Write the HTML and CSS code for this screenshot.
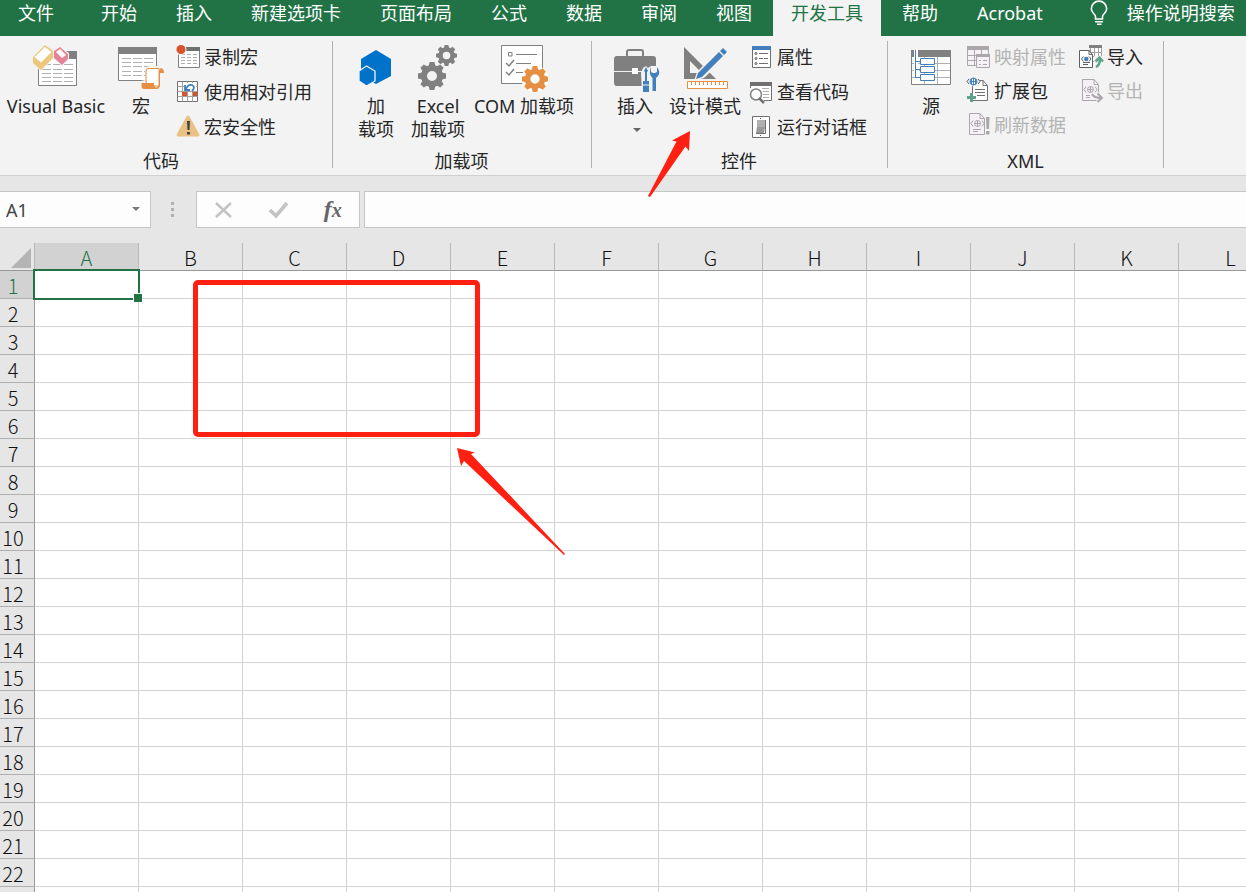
FILE: index.html
```html
<!DOCTYPE html>
<html lang="zh-CN">
  <head>
    <meta charset="UTF-8" />
    <meta name="viewport" content="width=device-width, initial-scale=1.0" />
    <link rel="stylesheet" href="styles.css">
    <title>Excel - 开发工具</title>
  </head>
  <body>
    <svg class="symbols" aria-hidden="true">
      <symbol id="gear" viewBox="-14 -14 28 28">
        <circle r="8" fill="none" stroke="currentColor" stroke-width="6" />
        <g id="teeth" fill="currentColor">
          <path d="M-3.4-10L-2.4-14H2.4L3.4-10ZM-3.4 10L-2.4 14H2.4L3.4 10ZM-10-3.4L-14-2.4V2.4L-10 3.4ZM10-3.4L14-2.4V2.4L10 3.4Z" />
          <path transform="rotate(45)" d="M-3.4-10L-2.4-14H2.4L3.4-10ZM-3.4 10L-2.4 14H2.4L3.4 10ZM-10-3.4L-14-2.4V2.4L-10 3.4ZM10-3.4L14-2.4V2.4L10 3.4Z" />
        </g>
      </symbol>
    </svg>

    <nav class="tabs">
      <button class="tab file">文件</button>
      <button class="tab">开始</button>
      <button class="tab">插入</button>
      <button class="tab">新建选项卡</button>
      <button class="tab">页面布局</button>
      <button class="tab">公式</button>
      <button class="tab">数据</button>
      <button class="tab">审阅</button>
      <button class="tab">视图</button>
      <button class="tab active">开发工具</button>
      <button class="tab">帮助</button>
      <button class="tab">Acrobat</button>
      <button class="tell-me">
        <svg width="18" height="26" viewBox="0 0 18 26" fill="none" stroke="#fff" stroke-width="1.6">
          <path d="M5.500 19V16.500C5.500 14 1.300 13 1.300 8.800A7.700 7.700 0 0 1 16.700 8.800C16.700 13 12.500 14 12.500 16.500V19Z" />
          <path d="M5 21.700H13M7 24.300H11.500" />
        </svg>
        操作说明搜索
      </button>
    </nav>

    <main class="ribbon">
      <section class="group code">
        <div class="tools">
          <button class="big vb">
            <svg viewBox="0 0 48 48">
              <path d="M6.500 8.500H44.500V41.500H6.500Z" fill="#fff" stroke="#808080" />
              <path d="M34 7H45V15H34Z" fill="#808080" />
              <path d="M10 20.500H41M10 25.500H41M10 29.500H41M10 33.500H41M10 37.500H41" stroke="#b0b0b0" stroke-dasharray="9 2" />
              <path d="M0 13L12 0L22 8V14L9 27L0 20Z" fill="#f3f3f3" />
              <path d="M1 13L13 1L21 7V14L9 26L1 19Z" fill="#edc77c" />
              <path d="M2.500 13L13 3L19.500 8L9 18.500Z" fill="#fff" />
              <path d="M21 6L27 2L37 9V16L30 22L21 15Z" fill="#f3f3f3" />
              <path d="M22 7L28 3L36 10V15L30 21L22 14Z" fill="#e58498" />
              <path d="M24 8L28 5L34 11L30 14Z" fill="#fff" />
            </svg>
            <span>Visual Basic</span>
          </button>
          <button class="big macro">
            <svg viewBox="0 0 48 48">
              <path d="M1.500 4H39.500V36.500H1.500Z" fill="#fff" stroke="#808080" />
              <path d="M1 3H40V10H1Z" fill="#808080" />
              <path d="M5 14.500H36M5 18.500H36M5 22.500H36M5 27.500H36M5 31.500H36" stroke="#b0b0b0" stroke-dasharray="9 2" />
              <path d="M24 37L28 36V24L32 22H47V30H45V42L42 46H26L23 43Z" fill="#f3f3f3" />
              <path d="M29 38V27Q29 24.500 32 24.500H42V42H32Z" fill="#fff" stroke="#e68f43" />
              <path d="M30 24H43Q47 24 47 29H43V41Q43 45 39 45H27Q24.500 45 24.500 42V39H37Q37 44 40 43.500Q42 43 42 40V28Q42 25 44 24Z" fill="#e68f43" />
            </svg>
            <span>宏</span>
          </button>
          <div class="small-tools">
            <button class="small">
              <svg viewBox="0 0 24 24">
                <path d="M1.500 4V22.500H22.500V4" fill="#fff" stroke="#808080" />
                <path d="M8 2H23V6H8Z" fill="#707070" />
                <path d="M4 9.500H20M4 12.500H20M4 15.500H20M4 18.500H20" stroke="#b0b0b0" stroke-dasharray="4 2" />
                <circle cx="4" cy="4.500" r="5.500" fill="#f3f3f3" /><circle cx="4" cy="4.500" r="4.500" fill="#d9532c" />
              </svg>
              录制宏
            </button>
            <button class="small">
              <svg viewBox="0 0 24 24">
                <path d="M.5 1.500H20.500V21.500H.5Z" fill="#fff" stroke="#707070" />
                <path d="M.5 6.500H20.500M.5 11.500H20.500M.5 16.500H20.500M5.500 1.500V21.500M10.500 1.500V21.500M15.500 1.500V21.500" stroke="#a0a0a0" />
                <path d="M7 3H19V11H7Z" fill="#fff" />
                <path d="M5 12H10V16H5ZM16 12H20V16H16Z" fill="#d9532c" />
                <path d="M9 9Q11 4 15 5Q19 7 15 11M8 5V10H13" fill="none" stroke="#427fbd" stroke-width="1.800" />
              </svg>
              使用相对引用
            </button>
            <button class="small">
              <svg viewBox="0 0 24 24">
                <path d="M11 2L21 20H1Z" fill="#e9c283" stroke="#e9c283" stroke-width="3" stroke-linejoin="round" />
                <path d="M10 6H13L12.500 15H10.500ZM10 17H13V19.500H10Z" fill="#444" />
              </svg>
              宏安全性
            </button>
          </div>
        </div>
        <h2>代码</h2>
      </section>

      <section class="group addins">
        <div class="tools">
          <button class="big addin">
            <svg viewBox="0 0 48 48">
              <path d="M24 6L39 15V32L24 40L9 32V15Z" fill="#0072c9" />
              <path d="M14.500 22L23 27V37L14.500 42L7 37V27Z" fill="#0072c9" stroke="#f3f3f3" stroke-width="1.300" />
            </svg>
            <span>加<br>载项</span>
          </button>
          <button class="big excel">
            <svg viewBox="0 0 48 48" color="#808080">
              <use href="#gear" x="4" y="18" width="28" height="28" />
              <use href="#gear" x="22" y="1" width="21" height="21" />
            </svg>
            <span>Excel<br>加载项</span>
          </button>
          <button class="big com">
            <svg viewBox="0 0 48 48" color="#e68f43">
              <path d="M1.500 1.500H42.500V39.500H1.500Z" fill="#fff" stroke="#808080" />
              <path d="M8.500 8.500H12V12H8.500ZM16 10.500H37M16 19.500H31M16 28.500H24" fill="none" stroke="#808080" />
              <path d="M6 19L9 22L14 16M6 28L9 31L14 25" fill="none" stroke="#808080" stroke-width="1.500" />
              <circle cx="35" cy="35" r="13.500" fill="#fff" />
              <use href="#gear" x="22" y="22" width="26" height="26" />
            </svg>
            <span>COM 加载项</span>
          </button>
        </div>
        <h2>加载项</h2>
      </section>

      <section class="group controls">
        <div class="tools">
          <button class="big insert">
            <svg viewBox="0 0 48 48">
              <path d="M16 12V8Q16 6 18 6H30Q32 6 32 8V12" fill="none" stroke="#808080" stroke-width="2" />
              <path d="M6 12H42Q45 12 45 15V27H3V15Q3 12 6 12ZM3 28H45V39Q45 42 42 42H6Q3 42 3 39Z" fill="#808080" />
              <path d="M21 24H27V30H21Z" fill="#fff" />
              <path d="M30 29L32 24L35 22L37 24L40 22H49V34L46 36V48H31Z" fill="#f3f3f3" />
              <path d="M35 23L37 27L36 28V37H38V48H32V37H34V28L33 27Z" fill="#427fbd" />
              <path d="M32 41H38" stroke="#f3f3f3" />
              <path d="M40 23V28L42 29H44L46 28V23Q50 28 47 32L45 34V47H41.500V34Q37 30 40 23Z" fill="#427fbd" />
            </svg>
            <span>插入</span>
            <svg class="caret" viewBox="0 0 8 5"><path d="M0 0H8L4 4Z" fill="#666" /></svg>
          </button>
          <button class="big design">
            <svg viewBox="0 0 48 48">
              <path d="M3 3L35 35H3ZM9 17V29H21Z" fill="#808080" fill-rule="evenodd" />
              <path d="M13 37L16 28L40 3L48 10L23 34Z" fill="#f3f3f3" />
              <path d="M15 35L17 29L38 8L42 12L21 33ZM39 7L42 4L46 8L43 11Z" fill="#427fbd" />
              <path d="M6.500 37.500H46.500V44.500H6.500Z" fill="#fff" stroke="#e68f43" />
              <path d="M10.500 38V41M14.500 38V41M18.500 38V41M22.500 38V41M26.500 38V41M30.500 38V41M34.500 38V41M38.500 38V41M42.500 38V41" stroke="#e68f43" />
            </svg>
            <span>设计模式</span>
          </button>
          <div class="small-tools">
            <button class="small">
              <svg viewBox="0 0 24 24">
                <path d="M2.500 2.500H20.500V22.500H2.500Z" fill="#fff" stroke="#707070" />
                <path d="M2 1H21V5H2Z" fill="#427fbd" />
                <path d="M9 8.500H18M9 13.500H13M14 13.500H18M9 18.500H18" stroke="#707070" />
                <g fill="none" stroke="#555"><circle cx="6" cy="8.500" r="1" /><circle cx="6" cy="13.500" r="1" /><circle cx="6" cy="18.500" r="1" /></g>
              </svg>
              属性
            </button>
            <button class="small">
              <svg viewBox="0 0 24 24">
                <path d="M.5 2.500H21.500V20.500H.5Z" fill="#fff" />
                <path d="M.5 8V2.500H21.500V20.500H14" fill="none" stroke="#707070" />
                <path d="M0 2H22V6H0Z" fill="#707070" />
                <path d="M12 8.500H19M13 11.500H19M13 14.500H19M13 17.500H19" stroke="#b0b0b0" />
                <path d="M0 15H8V22H0Z" fill="#f3f3f3" />
                <circle cx="6" cy="14.500" r="5.500" fill="#fff" stroke="#808080" stroke-width="1.500" />
                <path d="M9 18L14 23" stroke="#707070" stroke-width="2.500" />
              </svg>
              查看代码
            </button>
            <button class="small">
              <svg viewBox="0 0 24 24">
                <path d="M2.500 1.500H19.500V22.500H2.500Z" fill="#fff" stroke="#707070" />
                <path d="M7 5H15V12H7Z" fill="#b0b0b0" /><path d="M7 12H15L14 18H6Z" fill="#999" />
                <path d="M6 18.500H15.500V5" fill="none" stroke="#707070" />
                <path d="M10.500 3V4M10.500 20V21" stroke="#555" />
              </svg>
              运行对话框
            </button>
          </div>
        </div>
        <h2>控件</h2>
      </section>

      <section class="group xml">
        <div class="tools">
          <button class="big source">
            <svg viewBox="0 0 48 48">
              <path d="M4.500 6.500H43.500V40.500H4.500Z" fill="#fff" stroke="#808080" />
              <path d="M4 6H44V13H4Z" fill="#808080" />
              <path d="M5 19.500H43M5 26.500H43M5 33.500H43M17.500 13V40M30.500 13V40" stroke="#b0b0b0" />
              <path d="M7 6H11V33H7Z" fill="#fff" />
              <path d="M8.500 6V33.500H13M8.500 17.500H13M8.500 25.500H13M13.500 14.500H27.500V20.500H13.500ZM13.500 22.500H27.500V28.500H13.500ZM13.500 30.500H27.500V36.500H13.500Z" fill="#fff" stroke="#427fbd" />
            </svg>
            <span>源</span>
          </button>
          <div class="small-tools">
            <button class="small" disabled>
              <svg viewBox="0 0 24 24">
                <path d="M.5 2.500H21.500V20.500H.5Z" fill="#f6f1f6" stroke="#aaa6aa" />
                <path d="M0 1H22V5H0ZM9 9H23V13H9Z" fill="#aaa6aa" />
                <path d="M1 10.500H9M1 15.500H9M7.500 5V20M14.500 5V9" stroke="#aaa6aa" />
                <path d="M9.500 10.500H22.500V22.500H9.500Z" fill="#f6f1f6" stroke="#aaa6aa" />
                <path d="M9 9H23V12H9Z" fill="#aaa6aa" />
                <path d="M12 15.500H14M16 15.500H20M12 19.500H14M16 19.500H20" stroke="#aaa6aa" />
              </svg>
              映射属性
            </button>
            <button class="small">
              <svg viewBox="0 0 24 24">
                <path d="M5.500 1.500H16L20.500 6.500V21.500H5.500Z" fill="#fff" stroke="#707070" />
                <path d="M16 1V6.500H20M8 10.500H18M8 13.500H18M10 16.500H18" fill="none" stroke="#707070" />
                <path d="M0-1H13V7H0Z" fill="#f3f3f3" />
                <path d="M2 0L0 2.500L2 5M11 0L13 2.500L11 5" fill="none" stroke="#555" />
                <circle cx="6.500" cy="2.500" r="3.500" fill="#fff" stroke="#427fbd" />
                <path d="M3 2.500H10M6.500-1V6M4.500 0V5M8.500 0V5" stroke="#427fbd" />
                <path d="M3 14H6V17H9V20H6V23H3V20H0V17H3Z" fill="#5ea48b" />
              </svg>
              扩展包
            </button>
            <button class="small" disabled>
              <svg viewBox="0 0 24 24">
                <path d="M2.500 .5H13L17.500 5.500V21.500H2.500Z" fill="#f6f1f6" stroke="#aaa6aa" />
                <path d="M13 .5V5.500H17M6 16.500H14M6 18.500H11M6 7.500L4 10.500L6 13.500M15 7.500L17 10.500L15 13.500M8 10.500H13M10.500 8V13" fill="none" stroke="#aaa6aa" />
                <circle cx="10.500" cy="10.500" r="3" fill="none" stroke="#aaa6aa" />
                <path d="M19 4H22.500L22 16H19.500ZM19 18H22.500V21.500H19Z" fill="#aaa6aa" />
              </svg>
              刷新数据
            </button>
          </div>
          <div class="small-tools">
            <button class="small">
              <svg viewBox="0 0 24 24">
                <path d="M10.500 1.500H21.500V16.500H10.500Z" fill="#fff" stroke="#a0a0a0" />
                <path d="M11 7.500H21M11 11.500H21M14.500 3V16M18.500 3V16" stroke="#a0a0a0" />
                <path d="M9 0H22V3H9Z" fill="#808080" />
                <path d="M-.5 5.500H9L12.500 9.500V22.500H-.5Z" fill="#fff" stroke="#606060" />
                <path d="M9 5V9.500H12M3 17.500H10M3 19.500H8M3.500 11.500L1.500 14L3.500 16.500M9 11.500L11 14L9 16.500" fill="none" stroke="#606060" />
                <circle cx="6.300" cy="14" r="2.300" fill="#427fbd" />
                <path d="M14 11H23V22H14Z" fill="#f3f3f3" />
                <path d="M16 22Q20 20 20 14M15.500 16.500L19.500 12.500L23 16.500" fill="none" stroke="#5ea48b" stroke-width="2.500" />
              </svg>
              导入
            </button>
            <button class="small" disabled>
              <svg viewBox="0 0 24 24">
                <path d="M2.500 .5H14L18.500 5.500V21.500H2.500Z" fill="#f6f1f6" stroke="#aaa6aa" />
                <path d="M14 .5V5.500H18M6 16.500H10M6 18.500H10M6 7.500L4 10.500L6 13.500M15 7.500L17 10.500L15 13.500M8 10.500H13M10.500 8V13" fill="none" stroke="#aaa6aa" />
                <circle cx="10.500" cy="10.500" r="3" fill="none" stroke="#aaa6aa" />
                <path d="M12 15Q14 19 21 19M17.500 14.500L22 19L17.500 23" fill="none" stroke="#f3f3f3" stroke-width="4" />
                <path d="M12 15Q14 19 21 19M17.500 14.500L22 19L17.500 23" fill="none" stroke="#aaa6aa" stroke-width="2" />
              </svg>
              导出
            </button>
          </div>
        </div>
        <h2>XML</h2>
      </section>
    </main>

    <div class="formula-bar">
      <div class="name-box">
        <input type="text" value="A1" aria-label="名称框">
        <button aria-label="名称列表"><svg class="caret" viewBox="0 0 8 5"><path d="M0 0H8L4 4Z" fill="#777" /></svg></button>
      </div>
      <div class="dots"><i></i><i></i><i></i></div>
      <div class="entry">
        <button aria-label="取消">
          <svg width="20" height="18" viewBox="0 0 20 18"><path d="M2 2L17 16M17 2L2 16" stroke="#c3c3c3" stroke-width="2.500" /></svg>
        </button>
        <button aria-label="输入">
          <svg width="20" height="18" viewBox="0 0 20 18"><path d="M1 9L7 15L18 2" fill="none" stroke="#c3c3c3" stroke-width="3.500" /></svg>
        </button>
        <button class="fx" aria-label="插入函数">f<span>x</span></button>
      </div>
      <input class="formula" type="text" aria-label="编辑栏">
    </div>

    <div class="sheet">
      <table>
        <thead>
          <tr id="columns"><th class="corner"><svg width="20" height="20" viewBox="0 0 20 20"><path d="M20 0V20H0Z" fill="#b4b4b4" /></svg></th></tr>
        </thead>
        <tbody id="rows"></tbody>
      </table>
    </div>

    <div class="mark-box"></div>
    <svg class="arrow arrow-design" viewBox="0 0 44 68"><path d="M42 1L24 10.500L28.500 11.500L0 66L2 67L37.500 16.500L41 21Z" /></svg>
    <svg class="arrow arrow-range" viewBox="0 0 110 108"><path d="M1 0L19 4.500L15 6L109 106L108 107L8 13L5 18Z" /></svg>

    <script>
      const columns = document.getElementById("columns");
      const rows = document.getElementById("rows");
      const letters = "ABCDEFGHIJKL";
      const rowCount = 22;

      for (const letter of letters) {
        const th = document.createElement("th");
        th.textContent = letter;
        if (letter === "A") th.className = "selected";
        columns.appendChild(th);
      }

      // one more row without a number fills the bottom edge
      for (let i = 1; i <= rowCount + 1; i++) {
        const tr = document.createElement("tr");
        const th = document.createElement("th");
        if (i <= rowCount) th.textContent = i;
        if (i === 1) th.className = "selected";
        tr.appendChild(th);
        for (const letter of letters) {
          const td = document.createElement("td");
          if (i === 1 && letter === "A") td.className = "current";
          tr.appendChild(td);
        }
        rows.appendChild(tr);
      }
    </script>
  </body>
</html>
```
FILE: styles.css
```css
* {
  box-sizing: border-box;
}
body {
  margin: 0;
  height: 100vh;
  overflow: hidden;
  position: relative;
  display: flex;
  flex-direction: column;
  font-family: "Noto Sans", "Noto Sans CJK SC", sans-serif;
  font-size: 18px;
  color: #262626;
  background: #fff;
}
button,
input {
  font: inherit;
  color: inherit;
  border: 0;
  padding: 0;
  margin: 0;
  background: none;
}
svg {
  display: block;
  flex: none;
}
.symbols {
  position: absolute;
  width: 0;
  height: 0;
}

/* tabs */
.tabs {
  display: flex;
  gap: 3px;
  height: 36px;
  flex: none;
  background: #217346;
  color: #fff;
  white-space: nowrap;
}
.tab {
  padding: 0 18px 10px;
  line-height: 26px;
}
.file {
  margin-right: 8px;
}
.tab.active {
  background: #f3f3f3;
  color: #217346;
}
.tell-me {
  display: flex;
  align-items: flex-start;
  gap: 19px;
  margin-left: 26px;
  line-height: 26px;
}

/* ribbon */
.ribbon {
  display: flex;
  flex: none;
  height: 140px;
  padding: 5px 0 7px;
  background: #f3f3f3;
  border-bottom: 1px solid #d0d0d0;
  white-space: nowrap;
}
.group {
  display: flex;
  flex-direction: column;
  justify-content: space-between;
  border-right: 1px solid #b0b0b0;
}
.group h2 {
  margin: 0;
  font-size: 18px;
  font-weight: normal;
  line-height: 14px;
  text-align: center;
}
.tools {
  display: flex;
  align-items: flex-start;
  padding-top: 3px;
}
.big {
  display: flex;
  flex-direction: column;
  align-items: center;
  line-height: 23px;
}
.big svg {
  width: 48px;
  height: 48px;
  margin-bottom: 3px;
  overflow: visible;
}
.caret,
.big .caret {
  width: 8px;
  height: 5px;
  margin: 10px 0 0 4px;
}
.small-tools {
  display: flex;
  flex-direction: column;
  align-items: flex-start;
  gap: 11px;
  padding-top: 1px;
}
.small {
  display: flex;
  align-items: center;
  gap: 3px;
  line-height: 24px;
}
.small svg {
  width: 24px;
  height: 24px;
  overflow: visible;
}
.small:disabled {
  color: #b4b4b4;
}
.code {
  width: 333px;
  padding-right: 10px;
}
.vb {
  width: 112px;
}
.macro {
  width: 58px;
  margin-right: 7px;
}
.addins {
  width: 259px;
  padding-left: 17px;
}
.addins h2 {
  padding-right: 18px;
}
.controls h2 {
  padding-right: 17px;
}
.addin {
  width: 52px;
}
.excel {
  width: 72px;
}
.com {
  width: 100px;
}
.controls {
  width: 296px;
  padding-left: 16px;
}
.insert {
  width: 54px;
}
.design {
  width: 86px;
  margin-right: 2px;
}
.xml {
  width: 276px;
}
.source {
  width: 86px;
  margin-right: -7px;
}
.xml .small-tools {
  gap: 10px;
  margin-right: 14px;
}

/* formula bar */
.formula-bar {
  display: flex;
  flex: none;
  padding: 15px 0;
  background: #e6e6e6;
}
.name-box,
.entry,
.formula {
  height: 37px;
  background: #fdfdfd;
  border: 1px solid #c6c6c6;
}
.name-box {
  display: flex;
  align-items: center;
  width: 151px;
  border-left: 0;
}
.name-box input {
  flex: 1;
  min-width: 0;
  padding-left: 6px;
  color: #444;
}
.name-box button {
  width: 28px;
}
.name-box .caret {
  margin: 0 0 0 10px;
}
.dots {
  display: flex;
  flex-direction: column;
  justify-content: center;
  gap: 3px;
  width: 45px;
  padding-left: 20px;
}
.dots i {
  width: 3px;
  height: 3px;
  background: #b0b0b0;
}
.entry {
  display: flex;
  align-items: center;
  justify-content: space-around;
  width: 164px;
  margin-right: 4px;
}
.fx {
  font: italic bold 24px/32px "Liberation Serif", serif;
  color: #666;
}
.fx span {
  font-size: 20px;
}
.formula {
  flex: 1;
  border-right: 0;
}

/* sheet */
.sheet {
  flex: 1;
  min-height: 0;
  overflow: hidden;
}
table {
  table-layout: fixed;
  width: 1283px;
  border-collapse: separate;
  border-spacing: 0;
  font-family: "Noto Sans CJK SC", sans-serif;
  font-size: 20px;
}
th,
td {
  width: 104px;
  height: 28px;
  padding: 0;
  line-height: 27px;
  border-right: 1px solid #d4d4d4;
  border-bottom: 1px solid #d4d4d4;
}
th {
  font-weight: 300;
  color: #111;
  background: #e6e6e6;
}
thead th {
  padding-top: 2px;
  line-height: 25px;
  border-right-color: #b8b8b8;
  border-bottom-color: #999;
}
tbody th {
  padding: 2px 8px 0 0;
  line-height: 25px;
  border-right-color: #999;
  border-bottom-color: #b0b0b0;
}
.corner {
  width: 35px;
}
.corner svg {
  margin-left: 11px;
}
th.selected {
  background: #d2d2d2;
  color: #217346;
}
.current {
  position: relative;
}
.current::before {
  content: "";
  position: absolute;
  inset: -2px;
  border: 2px solid #217346;
}
.current::after {
  content: "";
  position: absolute;
  right: -4px;
  bottom: -4px;
  width: 8px;
  height: 8px;
  background: #217346;
  border: 1px solid #fff;
  border-width: 1px 0 0 1px;
}

/* red marks */
.mark-box {
  position: absolute;
  left: 193px;
  top: 280px;
  width: 287px;
  height: 157px;
  border: 5px solid #ff2012;
  border-radius: 5px;
}
.arrow {
  position: absolute;
  fill: #ff2012;
}
.arrow-design {
  left: 648px;
  top: 130px;
  width: 44px;
  height: 68px;
}
.arrow-range {
  left: 456px;
  top: 448px;
  width: 110px;
  height: 108px;
}
```
